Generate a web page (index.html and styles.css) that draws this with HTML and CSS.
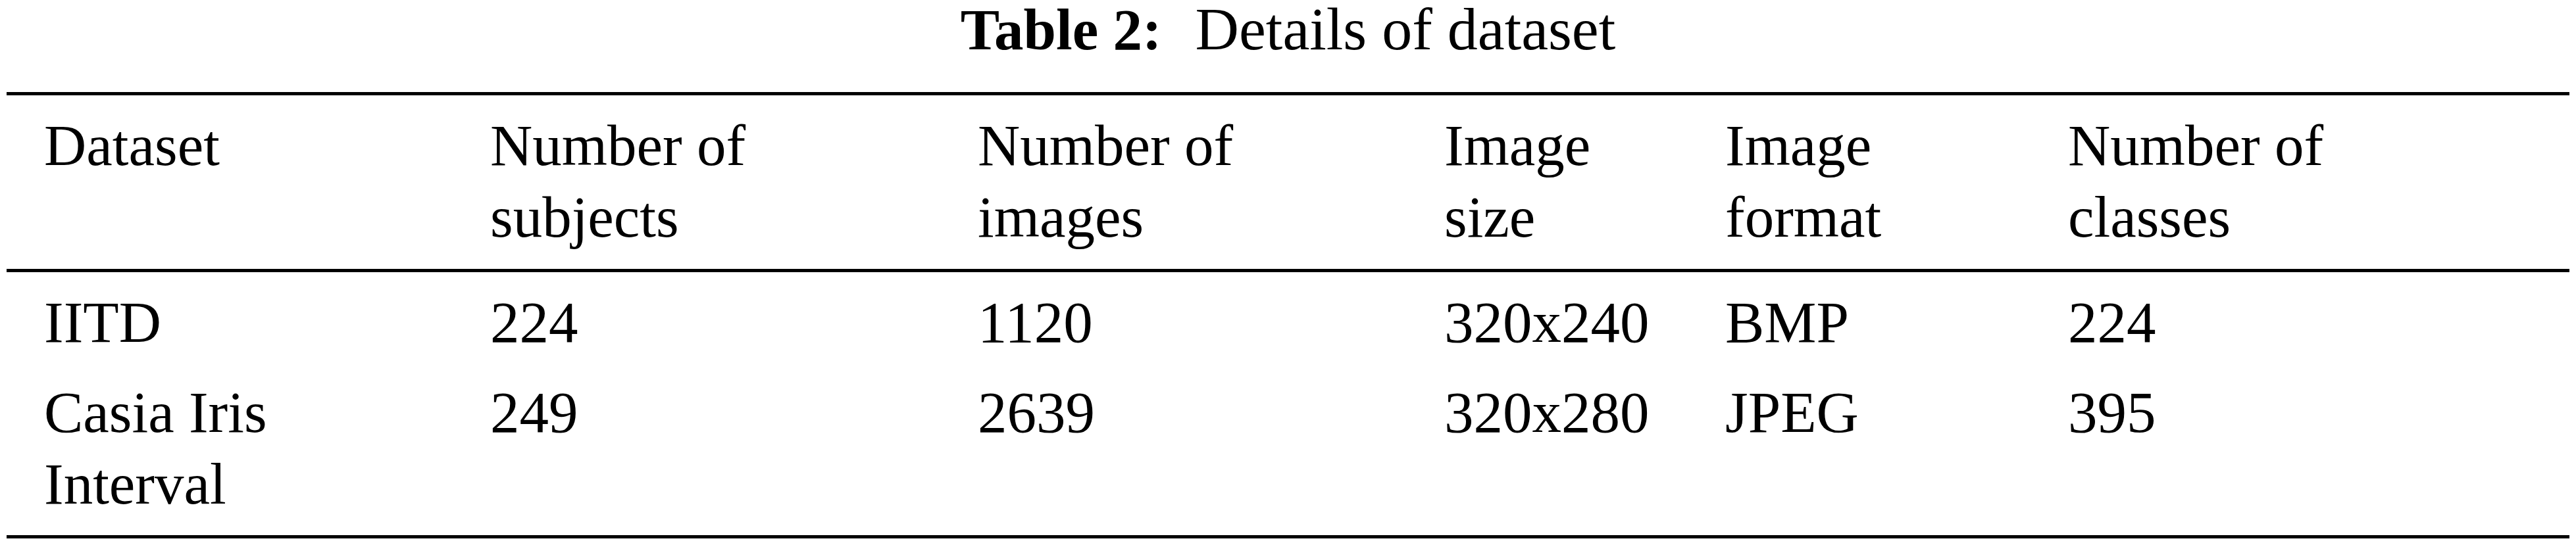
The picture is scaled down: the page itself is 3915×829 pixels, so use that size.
FILE: index.html
```html
<!DOCTYPE html>
<html lang="en">
<head>
<meta charset="utf-8">
<title>Table 2: Details of dataset</title>
<link rel="stylesheet" href="styles.css">
</head>
<body>
<div class="page">
  <div class="title"><span class="label">Table 2:</span> Details of dataset</div>
  <table class="data">
    <colgroup>
      <col class="c1"><col class="c2"><col class="c3"><col class="c4"><col class="c5"><col class="c6">
    </colgroup>
    <thead>
      <tr>
        <th>Dataset</th>
        <th>Number of<br>subjects</th>
        <th>Number of<br>images</th>
        <th>Image<br>size</th>
        <th>Image<br>format</th>
        <th>Number of<br>classes</th>
      </tr>
    </thead>
    <tbody>
      <tr>
        <td>IITD</td>
        <td>224</td>
        <td>1120</td>
        <td>320x240</td>
        <td>BMP</td>
        <td>224</td>
      </tr>
      <tr>
        <td>Casia Iris<br>Interval</td>
        <td>249</td>
        <td>2639</td>
        <td>320x280</td>
        <td>JPEG</td>
        <td>395</td>
      </tr>
    </tbody>
  </table>
</div>
</body>
</html>
```
FILE: styles.css
```css
html, body {
  margin: 0;
  padding: 0;
  background: #ffffff;
}

body {
  font-family: "Liberation Serif", "Times New Roman", serif;
  font-size: 89px;
  line-height: 109px;
  color: #000000;
}

.page {
  width: 3915px;
}

.title {
  text-align: center;
  font-size: 92px;
  line-height: 89px;
  height: 89px;
  margin-bottom: 51px;
}

.title .label {
  font-weight: bold;
  font-size: 89px;
  margin-right: 28px;
}

.data {
  border-collapse: collapse;
  margin-left: 10px;
  width: 3895px;
  table-layout: fixed;
  border-top: 5px solid #000;
  border-bottom: 5px solid #000;
}

.data col.c1 { width: 735px; }
.data col.c2 { width: 741px; }
.data col.c3 { width: 709px; }
.data col.c4 { width: 427px; }
.data col.c5 { width: 521px; }
.data col.c6 { width: 762px; }

.data th,
.data td {
  text-align: left;
  vertical-align: top;
  font-weight: normal;
  padding: 0;
}

.data th:first-child,
.data td:first-child {
  padding-left: 57px;
}

.data thead th {
  padding-top: 22px;
  padding-bottom: 24px;
  border-bottom: 5px solid #000;
}

.data tbody td {
  padding-top: 14px;
  padding-bottom: 14px;
}

.data tbody tr:first-child td {
  padding-top: 22px;
}

.data tbody tr:last-child td {
  padding-bottom: 23px;
}
```
